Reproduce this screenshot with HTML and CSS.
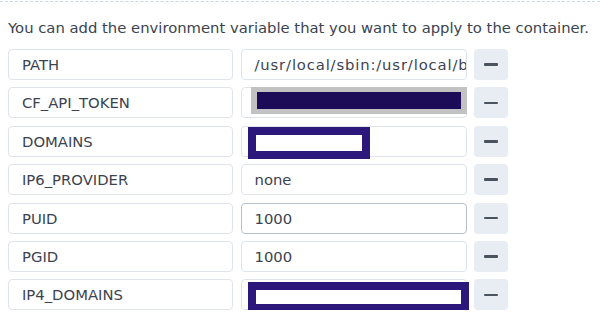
FILE: index.html
```html
<!DOCTYPE html>
<html lang="en">

<head>
  <meta charset="UTF-8">
  <meta name="viewport" content="width=device-width, initial-scale=1.0">
  <title>Environment</title>
  <link rel="stylesheet" href="styles.css">
</head>

<body>
  <div class="env-panel">
    <p class="env-desc">You can add the environment variable that you want to apply to the container.</p>

    <div class="env-list">
      <div class="env-row">
        <div class="field">PATH</div>
        <div class="field path-value">/usr/local/sbin:/usr/local/bin:/usr/sbin:/usr/bin</div>
        <button class="remove-btn" aria-label="Remove"><span class="minus"></span></button>
      </div>
      <div class="env-row">
        <div class="field">CF_API_TOKEN</div>
        <div class="field redacted"><span class="mask mask-token"></span></div>
        <button class="remove-btn" aria-label="Remove"><span class="minus"></span></button>
      </div>
      <div class="env-row">
        <div class="field">DOMAINS</div>
        <div class="field redacted"><span class="mask mask-short"></span></div>
        <button class="remove-btn" aria-label="Remove"><span class="minus"></span></button>
      </div>
      <div class="env-row">
        <div class="field">IP6_PROVIDER</div>
        <div class="field">none</div>
        <button class="remove-btn" aria-label="Remove"><span class="minus"></span></button>
      </div>
      <div class="env-row">
        <div class="field">PUID</div>
        <div class="field hovered">1000</div>
        <button class="remove-btn" aria-label="Remove"><span class="minus"></span></button>
      </div>
      <div class="env-row">
        <div class="field">PGID</div>
        <div class="field">1000</div>
        <button class="remove-btn" aria-label="Remove"><span class="minus"></span></button>
      </div>
      <div class="env-row">
        <div class="field">IP4_DOMAINS</div>
        <div class="field redacted"><span class="mask mask-long"></span></div>
        <button class="remove-btn" aria-label="Remove"><span class="minus"></span></button>
      </div>
    </div>
  </div>
</body>
</html>
```

FILE: styles.css
```css
body {
  margin: 0;
  font-family: 'DejaVu Sans', Verdana, sans-serif;
  color: #3b4350;
  background-color: #fff;
  overflow: hidden;
}

.env-panel {
  margin-top: 1px;
  border-top: 1px dashed #c6d8ea;
  padding: 0 8px;
}

.env-desc {
  margin: 0;
  padding-top: 17px;
  font-size: 14.8px;
  line-height: 18px;
  white-space: nowrap;
}

.env-list {
  display: flex;
  flex-direction: column;
  gap: 7.4px;
  margin-top: 12px;
}

.env-row {
  display: grid;
  grid-template-columns: 225px 226px 34px;
  column-gap: 7.5px;
  height: 31px;
}

.field {
  position: relative;
  box-sizing: border-box;
  height: 31px;
  padding: 0 0 0 13px;
  border: 1px solid #dfe4ea;
  border-radius: 4px;
  font-size: 14.8px;
  line-height: 29px;
  white-space: nowrap;
  overflow: hidden;
}

.field.path-value {
  letter-spacing: 0.85px;
}

.field.hovered {
  border-color: #b9c0c9;
}

.field.redacted {
  overflow: visible;
}

/* blacked out values */
.mask {
  position: absolute;
  box-sizing: border-box;
}

.mask-token {
  left: 9px;
  top: -1px;
  width: 216px;
  height: 27px;
  border: solid #c2c2c2;
  border-width: 5px 6px;
  background-color: #1c0b56;
}

.mask-short {
  left: 6px;
  top: 0;
  width: 122px;
  height: 32px;
  border: 8px solid #2c187a;
  background-color: #fff;
}

.mask-long {
  left: 6px;
  top: 2px;
  width: 221px;
  height: 30px;
  border: 8px solid #2c187a;
  background-color: #fff;
}

.remove-btn {
  display: flex;
  align-items: center;
  justify-content: center;
  height: 31px;
  padding: 0;
  border: none;
  border-radius: 4px;
  background-color: #e8ecf3;
  cursor: pointer;
}

.minus {
  display: block;
  width: 14px;
  height: 2.5px;
  border-radius: 1px;
  background-color: #4a5260;
}
```
